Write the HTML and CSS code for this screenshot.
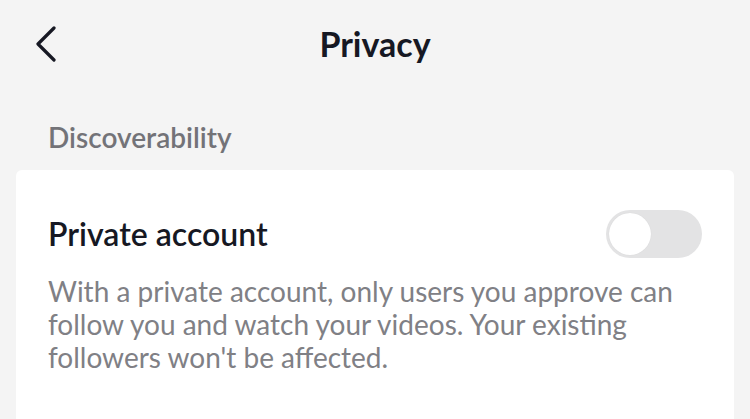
FILE: index.html
```html
<!DOCTYPE html>
<html lang="en">
<head>
<meta charset="utf-8">
<title>Privacy</title>
<link rel="stylesheet" href="styles.css">
</head>
<body>
<div class="screen">
  <header class="topbar">
    <button class="back" aria-label="Back">
      <svg width="24" height="36" viewBox="0 0 24 36"><path d="M20 2 L4 18 L20 34" fill="none" stroke="#161823" stroke-width="3.2" stroke-linecap="round" stroke-linejoin="round"/></svg>
    </button>
    <h1 class="title">Privacy</h1>
    <div class="spacer"></div>
  </header>
  <div class="section-label">Discoverability</div>
  <section class="card">
    <div class="row">
      <div class="row-title">Private account</div>
      <div class="toggle"><div class="knob"></div></div>
    </div>
    <p class="desc">With a private account, only users you approve can follow you and watch your videos. Your existing followers won't be affected.</p>
  </section>
</div>
</body>
</html>
```
FILE: styles.css
```css
html, body {
  margin: 0;
  padding: 0;
  background: #f4f4f4;
}
body {
  font-family: "Lato", "Liberation Sans", sans-serif;
  width: 750px;
  height: 419px;
  overflow: hidden;
}
.screen {
  display: flex;
  flex-direction: column;
}
.topbar {
  height: 87px;
  display: grid;
  grid-template-columns: 1fr auto 1fr;
  align-items: center;
  padding: 0 34px;
}
.back {
  width: 40px;
  height: 40px;
  border: 0;
  background: none;
  padding: 0;
  display: flex;
  align-items: center;
}
.title {
  margin: 0;
  font-size: 34px;
  line-height: 40px;
  font-weight: 700;
  color: #161823;
}
.section-label {
  padding: 33px 48px 0;
  font-size: 28px;
  line-height: 34px;
  font-weight: 600;
  color: #737378;
  height: 83px;
  box-sizing: border-box;
}
.card {
  margin: 0 16px;
  background: #fff;
  border-radius: 6px 6px 0 0;
  padding: 40px 32px 45px 32px;
}
.row {
  display: flex;
  align-items: center;
  justify-content: space-between;
}
.row-title {
  font-size: 32px;
  line-height: 40px;
  font-weight: 600;
  color: #161823;
}
.toggle {
  width: 96px;
  height: 48px;
  border-radius: 24px;
  background: #e3e3e4;
  box-sizing: border-box;
  padding: 3px;
}
.knob {
  width: 42px;
  height: 42px;
  border-radius: 50%;
  background: #fff;
  box-shadow: 0 0 1px rgba(0,0,0,0.1);
}
.desc {
  margin: 17px 0 0;
  font-size: 28px;
  line-height: 33px;
  color: #808085;
}
```
